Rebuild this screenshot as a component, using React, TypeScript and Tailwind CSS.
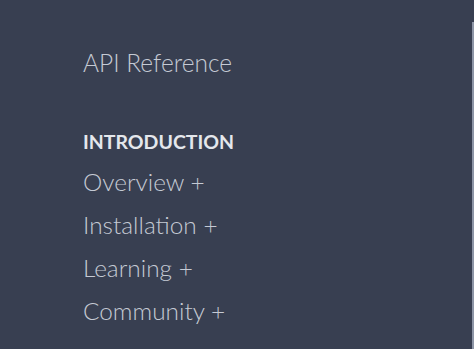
export default function App() {
  const items = ['Overview', 'Installation', 'Learning', 'Community']
  return (
    <div className="flex h-[349px] w-[474px] bg-[#383f51] font-['Lato',sans-serif]">
      <div className="flex flex-1 flex-col pl-[83px] pt-[47px]">
        <p className="text-[24.5px] font-light leading-[32px] text-[#c5cad4]">
          API Reference
        </p>
        <p className="mt-[51px] text-[19.5px] font-bold leading-[24px] text-[#e4e7ec]">
          INTRODUCTION
        </p>
        <ul className="mt-[6px] flex flex-col">
          {items.map((item) => (
            <li
              key={item}
              className="text-[24.4px] font-light leading-[43px] text-[#c5cad4]"
            >
              {item} +
            </li>
          ))}
        </ul>
      </div>
      <div className="flex w-[2px] flex-col pt-[22px]">
        <div className="flex-1 bg-[#8d95a6]" />
      </div>
    </div>
  )
}
